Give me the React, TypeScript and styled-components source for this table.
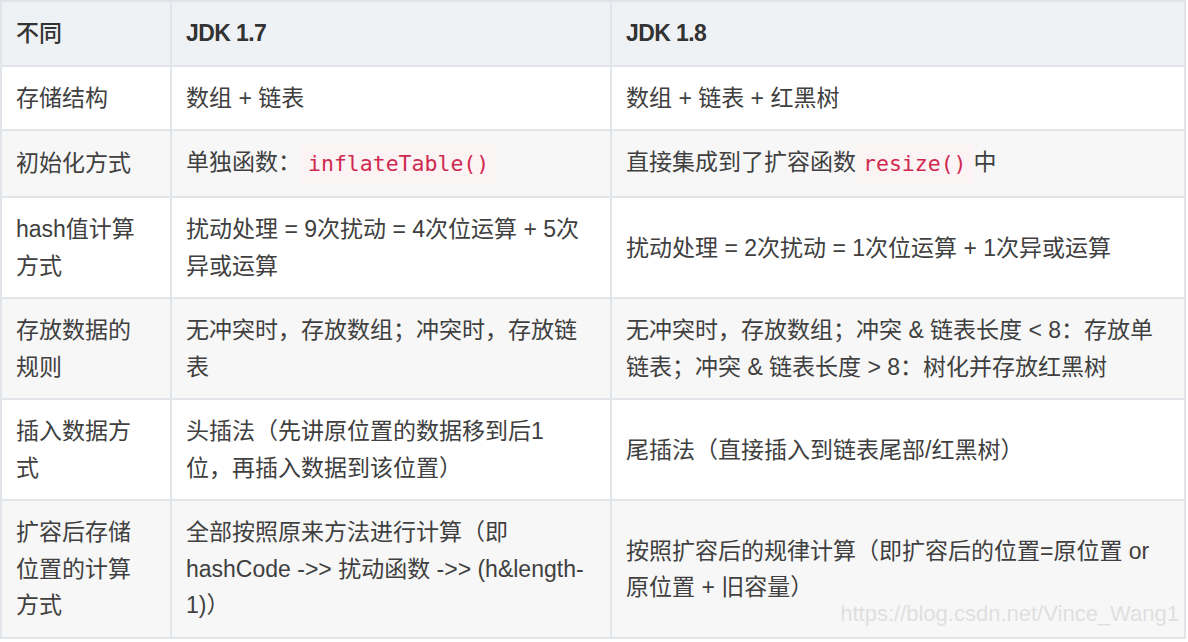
import React from "react";
import styled, { createGlobalStyle } from "styled-components";

const Global = createGlobalStyle`
  html, body { margin: 0; padding: 0; background: #ffffff; }
  body { font-family: "Liberation Sans", "Noto Sans CJK SC", sans-serif; }
`;

const Wrap = styled.div`
  position: relative;
  width: 1185px;
`;

const Table = styled.table`
  border-collapse: collapse;
  table-layout: fixed;
  width: 1184px;
  font-size: 23px;
  line-height: 36.5px;
  color: #404040;
`;

const Th = styled.th`
  border: 2px solid #e1e4e8;
  background: #eff2f5;
  color: #333333;
  font-weight: 700;
  text-align: left;
  padding: 13px 14px;
  white-space: nowrap;
  letter-spacing: -0.6px;
`;

const CjkHead = styled.span`
  font-weight: 500;
  letter-spacing: 0;
`;

const Tr = styled.tr<{ $alt?: boolean }>`
  background: ${(p) => (p.$alt ? "#f7f7f7" : "#ffffff")};
`;

const Td = styled.td`
  border: 2px solid #e1e4e8;
  padding: 13px 14px;
  vertical-align: middle;
  white-space: nowrap;
`;

const Code = styled.code`
  display: inline-block;
  font-family: "DejaVu Sans Mono", "Liberation Mono", monospace;
  font-size: 21.5px;
  line-height: 32px;
  color: #d0294f;
  background: #fcf3f5;
  padding: 4px 7px 3px;
  border-radius: 3px;
  vertical-align: middle;
`;

const Watermark = styled.div`
  position: absolute;
  right: 6px;
  bottom: 12px;
  font-family: "Liberation Sans", sans-serif;
  font-size: 22px;
  color: rgba(200, 200, 200, 0.5);
  pointer-events: none;
`;

type Row = { a: React.ReactNode; b: React.ReactNode; c: React.ReactNode };

const rows: Row[] = [
  { a: "存储结构", b: "数组 + 链表", c: "数组 + 链表 + 红黑树" },
  {
    a: "初始化方式",
    b: (
      <>
        单独函数：<Code>inflateTable()</Code>
      </>
    ),
    c: (
      <>
        直接集成到了扩容函数<Code>resize()</Code>中
      </>
    ),
  },
  {
    a: (
      <>
        hash值计算
        <br />
        方式
      </>
    ),
    b: (
      <>
        扰动处理 = 9次扰动 = 4次位运算 + 5次
        <br />
        异或运算
      </>
    ),
    c: "扰动处理 = 2次扰动 = 1次位运算 + 1次异或运算",
  },
  {
    a: (
      <>
        存放数据的
        <br />
        规则
      </>
    ),
    b: (
      <>
        无冲突时，存放数组；冲突时，存放链
        <br />表
      </>
    ),
    c: (
      <>
        无冲突时，存放数组；冲突 &amp; 链表长度 &lt; 8：存放单
        <br />
        链表；冲突 &amp; 链表长度 &gt; 8：树化并存放红黑树
      </>
    ),
  },
  {
    a: (
      <>
        插入数据方
        <br />式
      </>
    ),
    b: (
      <>
        头插法（先讲原位置的数据移到后1
        <br />
        位，再插入数据到该位置）
      </>
    ),
    c: "尾插法（直接插入到链表尾部/红黑树）",
  },
  {
    a: (
      <>
        扩容后存储
        <br />
        位置的计算
        <br />
        方式
      </>
    ),
    b: (
      <>
        全部按照原来方法进行计算（即
        <br />
        hashCode -&gt;&gt; 扰动函数 -&gt;&gt; (h&amp;length-
        <br />
        1)）
      </>
    ),
    c: (
      <>
        按照扩容后的规律计算（即扩容后的位置=原位置 or
        <br />
        原位置 + 旧容量）
      </>
    ),
  },
];

export default function App() {
  return (
    <Wrap>
      <Global />
      <Table>
        <colgroup>
          <col style={{ width: 170 }} />
          <col style={{ width: 440 }} />
          <col style={{ width: 574 }} />
        </colgroup>
        <thead>
          <tr>
            <Th>
              <CjkHead>不同</CjkHead>
            </Th>
            <Th>JDK 1.7</Th>
            <Th>JDK 1.8</Th>
          </tr>
        </thead>
        <tbody>
          {rows.map((r, i) => (
            <Tr key={i} $alt={i % 2 === 1}>
              <Td>{r.a}</Td>
              <Td>{r.b}</Td>
              <Td>{r.c}</Td>
            </Tr>
          ))}
        </tbody>
      </Table>
      <Watermark>https://blog.csdn.net/Vince_Wang1</Watermark>
    </Wrap>
  );
}
